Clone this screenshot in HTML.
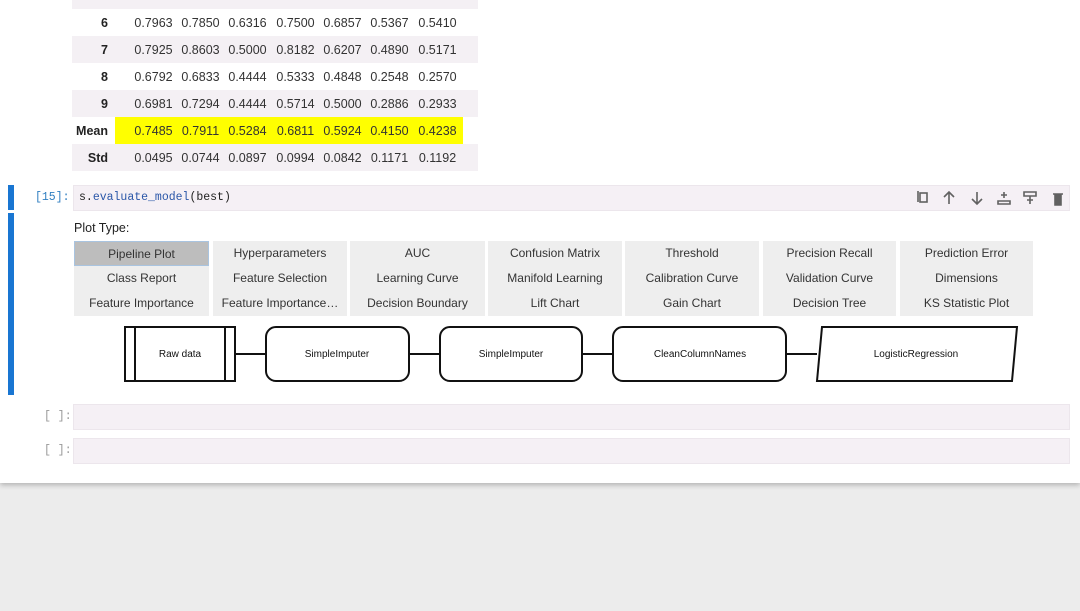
<!DOCTYPE html>
<html><head><meta charset="utf-8"><style>
*{margin:0;padding:0;box-sizing:border-box}
body{width:1080px;height:611px;background:#ececec;position:relative;overflow:hidden;font-family:"Liberation Sans",sans-serif}
.page{position:absolute;left:0;top:0;width:1080px;height:483px;background:#fff;box-shadow:0 2px 5px rgba(0,0,0,.25)}
.a{position:absolute}
.row{position:absolute;left:72px;width:406px;height:27px;font-size:12.5px;color:#333}
.row span{position:absolute;top:7px;width:47px;text-align:center}
.row b{position:absolute;top:7px;right:370px;font-size:12.5px;color:#222}
.st{background:#f4f0f4}
.code{background:#f5f0f5;border:1px solid #ece6ec}
.btn{position:absolute;height:25px;background:#eeeeee;font-size:12px;color:#333;text-align:center;line-height:25px;white-space:nowrap;overflow:hidden}
.pr{position:absolute;font-family:"Liberation Mono",monospace;font-size:11.5px;color:#307fc1}
</style></head><body>
<div class="page">
<div class="row st" style="top:-18px"></div>
<div class="row" style="top:9px"><b>6</b><span style="left:58px">0.7963</span><span style="left:105px">0.7850</span><span style="left:152px">0.6316</span><span style="left:200px">0.7500</span><span style="left:247px">0.6857</span><span style="left:294px">0.5367</span><span style="left:342px">0.5410</span></div>
<div class="row st" style="top:36px"><b>7</b><span style="left:58px">0.7925</span><span style="left:105px">0.8603</span><span style="left:152px">0.5000</span><span style="left:200px">0.8182</span><span style="left:247px">0.6207</span><span style="left:294px">0.4890</span><span style="left:342px">0.5171</span></div>
<div class="row" style="top:63px"><b>8</b><span style="left:58px">0.6792</span><span style="left:105px">0.6833</span><span style="left:152px">0.4444</span><span style="left:200px">0.5333</span><span style="left:247px">0.4848</span><span style="left:294px">0.2548</span><span style="left:342px">0.2570</span></div>
<div class="row st" style="top:90px"><b>9</b><span style="left:58px">0.6981</span><span style="left:105px">0.7294</span><span style="left:152px">0.4444</span><span style="left:200px">0.5714</span><span style="left:247px">0.5000</span><span style="left:294px">0.2886</span><span style="left:342px">0.2933</span></div>
<div class="row" style="top:117px"><div class="a" style="left:43px;top:0;width:348px;height:27px;background:#ffff00"></div><b>Mean</b><span style="left:58px">0.7485</span><span style="left:105px">0.7911</span><span style="left:152px">0.5284</span><span style="left:200px">0.6811</span><span style="left:247px">0.5924</span><span style="left:294px">0.4150</span><span style="left:342px">0.4238</span></div>
<div class="row st" style="top:144px"><b>Std</b><span style="left:58px">0.0495</span><span style="left:105px">0.0744</span><span style="left:152px">0.0897</span><span style="left:200px">0.0994</span><span style="left:247px">0.0842</span><span style="left:294px">0.1171</span><span style="left:342px">0.1192</span></div>

<div class="a" style="left:8px;top:185px;width:6px;height:25px;background:#1976d2"></div>
<div class="a" style="left:8px;top:213px;width:6px;height:182px;background:#1976d2"></div>
<div class="pr" style="left:35px;top:191px">[15]:</div>
<div class="a code" style="left:73px;top:185px;width:997px;height:26px"></div>
<div class="a" style="left:79px;top:191px;font-family:'Liberation Mono',monospace;font-size:11.5px;color:#222">s.<span style="color:#2a56a8">evaluate_model</span>(best)</div>
<svg class="a" style="left:912px;top:189px" width="160" height="18" fill="none" stroke="#616161" stroke-width="1.6">
<rect x="8" y="4" width="7" height="9"/><path d="M6 2v11"/>
<path d="M37 15V3M32 8l5-5 5 5"/>
<path d="M65 3v12M60 10l5 5 5-5"/>
<path d="M92 3v6M89 6h6M86 12h12v3H86z"/>
<path d="M112 3h12v4h-12zM118 7v8M115 11h6"/>
<path d="M141 5h10M143 5v11h6V5" fill="#616161"/>
</svg>

<div class="a" style="left:74px;top:221px;font-size:12.5px;color:#222">Plot Type:</div>
<div class="btn" style="left:74px;top:241px;width:135px;background:#bdbdbd;border:1px solid #a9c4e0">Pipeline Plot</div>
<div class="btn" style="left:213px;top:241px;width:134px">Hyperparameters</div>
<div class="btn" style="left:350px;top:241px;width:135px">AUC</div>
<div class="btn" style="left:488px;top:241px;width:134px">Confusion Matrix</div>
<div class="btn" style="left:625px;top:241px;width:134px">Threshold</div>
<div class="btn" style="left:763px;top:241px;width:133px">Precision Recall</div>
<div class="btn" style="left:900px;top:241px;width:133px">Prediction Error</div>
<div class="btn" style="left:74px;top:266px;width:135px">Class Report</div>
<div class="btn" style="left:213px;top:266px;width:134px">Feature Selection</div>
<div class="btn" style="left:350px;top:266px;width:135px">Learning Curve</div>
<div class="btn" style="left:488px;top:266px;width:134px">Manifold Learning</div>
<div class="btn" style="left:625px;top:266px;width:134px">Calibration Curve</div>
<div class="btn" style="left:763px;top:266px;width:133px">Validation Curve</div>
<div class="btn" style="left:900px;top:266px;width:133px">Dimensions</div>
<div class="btn" style="left:74px;top:291px;width:135px">Feature Importance</div>
<div class="btn" style="left:213px;top:291px;width:134px">Feature Importance…</div>
<div class="btn" style="left:350px;top:291px;width:135px">Decision Boundary</div>
<div class="btn" style="left:488px;top:291px;width:134px">Lift Chart</div>
<div class="btn" style="left:625px;top:291px;width:134px">Gain Chart</div>
<div class="btn" style="left:763px;top:291px;width:133px">Decision Tree</div>
<div class="btn" style="left:900px;top:291px;width:133px">KS Statistic Plot</div>

<svg class="a" style="left:0;top:0" width="1080" height="483" fill="none" stroke="#111" stroke-width="2">
<rect x="125" y="327" width="110" height="54"/><path d="M135 327v54M225 327v54"/>
<path d="M235 354h31M409 354h31M582 354h31M786 354h31"/>
<rect x="266" y="327" width="143" height="54" rx="10"/>
<rect x="440" y="327" width="142" height="54" rx="10"/>
<rect x="613" y="327" width="173" height="54" rx="10"/>
<path d="M822 327h195l-5 54H817z"/>
<g font-family="Liberation Sans,sans-serif" font-size="10" fill="#111" stroke="none" text-anchor="middle">
<text x="180" y="357">Raw data</text><text x="337" y="357">SimpleImputer</text><text x="511" y="357">SimpleImputer</text><text x="700" y="357">CleanColumnNames</text><text x="916" y="357">LogisticRegression</text></g>
</svg>

<div class="pr" style="left:44px;top:410px;color:#999">[ ]:</div>
<div class="a code" style="left:73px;top:404px;width:997px;height:26px"></div>
<div class="pr" style="left:44px;top:444px;color:#999">[ ]:</div>
<div class="a code" style="left:73px;top:438px;width:997px;height:26px"></div>
</div>
</body></html>
